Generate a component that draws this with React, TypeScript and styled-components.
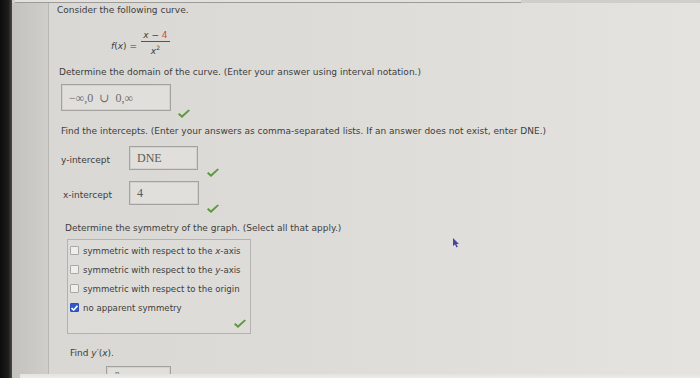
import styled, { createGlobalStyle } from 'styled-components';

const GlobalStyle = createGlobalStyle`
  html, body {
    margin: 0;
    padding: 0;
    background: #d9d8d4;
  }
  * {
    box-sizing: border-box;
  }
`;

const Check = () => (
  <svg width="14" height="10" viewBox="0 0 14 10">
    <path d="M1 5.5 L5 9 L13 1.5 L11.5 0.5 L5 6.2 L2.3 4 Z" fill="#5b9a3d" />
  </svg>
);

const BOXES = [
  { label: 'symmetric with respect to the ', axis: 'x', rest: '-axis', checked: false },
  { label: 'symmetric with respect to the ', axis: 'y', rest: '-axis', checked: false },
  { label: 'symmetric with respect to the origin', axis: '', rest: '', checked: false },
  { label: 'no apparent symmetry', axis: '', rest: '', checked: true },
];

export default function App() {
  return (
    <>
      <GlobalStyle />
      <Page>
        <Bezel />
        <Screen>
          <TopEdge />
          <Body>
            <Gutter />
            <Content>
              <Text $indent={8} $top={1}>Consider the following curve.</Text>

              <Formula>
                <Lhs>
                  <i>f</i>(<i>x</i>) =
                </Lhs>
                <Fraction>
                  <Numerator>
                    <i>x</i> − <Red>4</Red>
                  </Numerator>
                  <Bar />
                  <Denominator>
                    <i>x</i>
                    <sup>2</sup>
                  </Denominator>
                </Fraction>
              </Formula>

              <Text $indent={10} $top={9}>
                Determine the domain of the curve. (Enter your answer using interval notation.)
              </Text>

              <AnswerRow $indent={12} $top={6} $height={27}>
                <Answer $width={110} $height={27}>
                  <Value $muted>−∞,0&nbsp;&nbsp;∪&nbsp;&nbsp;0,∞</Value>
                </Answer>
                <CheckSlot $left={6} $down={25}>
                  <Check />
                </CheckSlot>
              </AnswerRow>

              <Text $indent={12} $top={14}>
                Find the intercepts. (Enter your answers as comma-separated lists. If an answer does not
                exist, enter DNE.)
              </Text>

              <AnswerRow $indent={12} $top={9} $height={24}>
                <Label $width={68}>y-intercept</Label>
                <Answer $width={69} $height={24}>
                  <Value>DNE</Value>
                </Answer>
                <CheckSlot $left={8} $down={22}>
                  <Check />
                </CheckSlot>
              </AnswerRow>

              <AnswerRow $indent={14} $top={11} $height={24}>
                <Label $width={66}>x-intercept</Label>
                <Answer $width={70} $height={24}>
                  <Value>4</Value>
                </Answer>
                <CheckSlot $left={7} $down={23}>
                  <Check />
                </CheckSlot>
              </AnswerRow>

              <Text $indent={16} $top={17}>
                Determine the symmetry of the graph. (Select all that apply.)
              </Text>

              <Group>
                {BOXES.map((box) => (
                  <Option key={box.label}>
                    <Box $checked={box.checked}>
                      {box.checked && (
                        <svg width="7" height="6" viewBox="0 0 7 6">
                          <path d="M0.5 3 L2.7 5 L6.5 0.8" stroke="#fff" strokeWidth="1.6" fill="none" />
                        </svg>
                      )}
                    </Box>
                    <span>
                      {box.label}
                      {box.axis && <i>{box.axis}</i>}
                      {box.rest}
                    </span>
                  </Option>
                ))}
                <GroupFooter>
                  <Check />
                </GroupFooter>
              </Group>

              <Text $indent={21} $top={13}>
                Find <i>y</i>′(<i>x</i>).
              </Text>

              <AnswerRow $indent={57} $top={7} $height={30}>
                <Answer $width={65} $height={30} $alignTop>
                  <Value $muted $small>n</Value>
                </Answer>
              </AnswerRow>
            </Content>
          </Body>
        </Screen>
        <Pointer>
          <svg width="7" height="10" viewBox="0 0 7 10">
            <path d="M0 0 L0 8 L2 6.5 L3.5 9.5 L4.8 8.8 L3.4 6 L6 6 Z" fill="#4a43a0" />
          </svg>
        </Pointer>
        <BottomGlare />
      </Page>
    </>
  );
}

const Page = styled.div`
  position: relative;
  display: flex;
  width: 700px;
  height: 378px;
  overflow: hidden;
  font-family: 'DejaVu Sans', Verdana, sans-serif;
  font-size: 9px;
  color: #3d3d3c;
`;

const Bezel = styled.div`
  width: 12px;
  flex-shrink: 0;
  background: linear-gradient(90deg, #0c0c0c 0%, #1d1d1d 70%, #4a4947 100%);
`;

const Screen = styled.div`
  flex: 1;
  display: flex;
  flex-direction: column;
  background: #cfceca;
`;

const TopEdge = styled.div`
  height: 3px;
  width: 506px;
  margin-left: 3px;
  flex-shrink: 0;
  background: #e2e1de;
  border-bottom: 1px solid #9c9b98;
`;

const Body = styled.div`
  flex: 1;
  display: flex;
`;

const Gutter = styled.div`
  width: 37px;
  flex-shrink: 0;
  background: linear-gradient(90deg, #c3c2be 0%, #cfceca 100%);
  border-right: 1px solid #b9b8b4;
`;

const Content = styled.div`
  flex: 1;
  display: flex;
  flex-direction: column;
  align-items: flex-start;
  background: linear-gradient(90deg, #d9d8d4 0%, #dedcd8 45%, #e5e3df 100%);
`;

const Text = styled.p<{ $indent: number; $top: number }>`
  margin: ${(p) => p.$top}px 0 0 ${(p) => p.$indent}px;
  line-height: 12px;
  white-space: nowrap;
`;

const Formula = styled.div`
  display: flex;
  align-items: center;
  gap: 4px;
  margin: 14px 0 0 62px;
`;

const Lhs = styled.span`
  line-height: 12px;
  margin-top: 4px;
`;

const Fraction = styled.div`
  display: flex;
  flex-direction: column;
  align-items: center;
`;

const Numerator = styled.span`
  line-height: 11px;
  padding: 0 1px;
`;

const Red = styled.span`
  color: #cf4b3c;
`;

const Bar = styled.div`
  width: 29px;
  height: 1px;
  background: #555;
`;

const Denominator = styled.span`
  line-height: 12px;

  sup {
    font-size: 6px;
    vertical-align: 4px;
  }
`;

const AnswerRow = styled.div<{ $indent: number; $top: number; $height: number }>`
  display: flex;
  align-items: flex-start;
  flex-shrink: 0;
  height: ${(p) => p.$height}px;
  margin: ${(p) => p.$top}px 0 0 ${(p) => p.$indent}px;
`;

const Label = styled.span<{ $width: number }>`
  width: ${(p) => p.$width}px;
  line-height: 24px;
  padding-top: 2px;
`;

const Answer = styled.div<{ $width: number; $height: number; $alignTop?: boolean }>`
  display: flex;
  align-items: ${(p) => (p.$alignTop ? 'flex-start' : 'center')};
  flex-shrink: 0;
  width: ${(p) => p.$width}px;
  height: ${(p) => p.$height}px;
  padding: ${(p) => (p.$alignTop ? '2px 0 0 8px' : '0 0 0 7px')};
  background: #e0dfdb;
  border: 1px solid #a3a29f;
  box-shadow: inset 0 0 0 1px #d2d1cd;
`;

const Value = styled.span<{ $muted?: boolean; $small?: boolean }>`
  font-family: 'Liberation Serif', 'DejaVu Serif', serif;
  font-size: ${(p) => (p.$small ? 9 : 12)}px;
  line-height: ${(p) => (p.$small ? 9 : 12)}px;
  color: ${(p) => (p.$muted ? '#6d6c69' : '#5a5a58')};
  white-space: nowrap;
`;

const CheckSlot = styled.div<{ $left: number; $down: number }>`
  display: flex;
  margin: ${(p) => p.$down}px 0 0 ${(p) => p.$left}px;
`;

const Group = styled.div`
  display: flex;
  flex-direction: column;
  flex-shrink: 0;
  width: 184px;
  height: 95px;
  margin: 5px 0 0 18px;
  padding: 1px 2px 0 2px;
  border: 1px solid #b3b2ae;
  background: #dedcd8;
`;

const Option = styled.div`
  display: flex;
  align-items: center;
  gap: 4px;
  height: 19px;
  white-space: nowrap;
  font-size: 8.6px;
`;

const Box = styled.span<{ $checked: boolean }>`
  display: flex;
  align-items: center;
  justify-content: center;
  width: 9px;
  height: 9px;
  flex-shrink: 0;
  border-radius: 1px;
  border: 1px solid ${(p) => (p.$checked ? '#2e4fb8' : '#a9a8a5')};
  background: ${(p) => (p.$checked ? '#3559c8' : '#eeeeec')};
`;

const GroupFooter = styled.div`
  display: flex;
  justify-content: flex-end;
  padding: 2px 1px 0 0;
`;

const Pointer = styled.div`
  position: absolute;
  left: 453px;
  top: 238px;
  display: flex;
`;

const BottomGlare = styled.div`
  position: absolute;
  left: 20px;
  right: 0;
  bottom: 0;
  height: 4px;
  background: linear-gradient(180deg, #e4e3e0 0%, #ecebe8 100%);
`;
